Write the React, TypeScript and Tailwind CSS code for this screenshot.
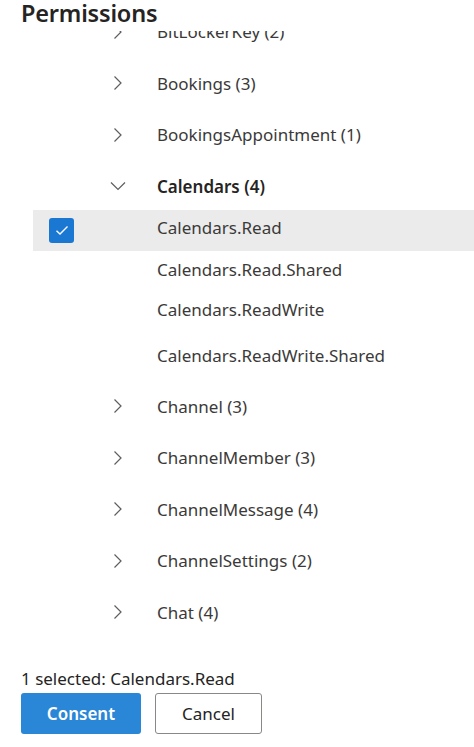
import React from 'react';

type Group = { name: string; count: number };

const before: Group[] = [
  { name: 'BitLockerKey', count: 2 },
  { name: 'Bookings', count: 3 },
  { name: 'BookingsAppointment', count: 1 },
];

const after: Group[] = [
  { name: 'Channel', count: 3 },
  { name: 'ChannelMember', count: 3 },
  { name: 'ChannelMessage', count: 4 },
  { name: 'ChannelSettings', count: 2 },
  { name: 'Chat', count: 4 },
];

const children = [
  { name: 'Calendars.Read', h: 'h-[41px]', checked: true },
  { name: 'Calendars.Read.Shared', h: 'h-[39px]', checked: false },
  { name: 'Calendars.ReadWrite', h: 'h-[41px]', checked: false },
  { name: 'Calendars.ReadWrite.Shared', h: 'h-[50px]', checked: false },
];

function ChevronRight() {
  return (
    <svg width="10" height="16" viewBox="0 0 10 16" fill="none">
      <path d="M1.5 1.5 L8 8 L1.5 14.5" stroke="#605e5c" strokeWidth="1.2" />
    </svg>
  );
}

function ChevronDown() {
  return (
    <svg width="16" height="10" viewBox="0 0 16 10" fill="none">
      <path d="M1 1.5 L8 8.5 L15 1.5" stroke="#605e5c" strokeWidth="1.2" />
    </svg>
  );
}

function GroupRow({ g }: { g: Group }) {
  return (
    <div className="h-[51.5px] flex items-center">
      <div className="w-[113px] shrink-0" />
      <div className="w-[44px] shrink-0 flex items-center">
        <ChevronRight />
      </div>
      <span>
        {g.name} ({g.count})
      </span>
    </div>
  );
}

export default function App() {
  return (
    <div
      className="w-[474px] h-[747px] bg-white flex flex-col text-[#3b3a39] overflow-hidden"
      style={{ fontFamily: '"Noto Sans", "Open Sans", sans-serif' }}
    >
      <h1 className="h-[31px] shrink-0 pl-[21px] text-[23.5px] leading-[27px] font-semibold text-[#252423] tracking-[-0.2px]">
        Permissions
      </h1>

      <div className="h-[609px] shrink-0 overflow-hidden text-[17px]">
        <div className="-mt-[25px]">
          {before.map((g) => (
            <GroupRow key={g.name} g={g} />
          ))}

          <div className="h-[49px] flex items-center">
            <div className="w-[110px] shrink-0" />
            <div className="w-[47px] shrink-0 flex items-center pt-[2px]">
              <ChevronDown />
            </div>
            <span className="font-semibold text-[#252423] mt-[3px]">Calendars (4)</span>
          </div>

          {children.map((c) => (
            <div
              key={c.name}
              className={`${c.h} flex items-center ml-[33px] ${c.checked ? 'bg-[#ebebeb]' : ''}`}
            >
              <div className="w-[124px] shrink-0 pl-[16px] flex items-center">
                {c.checked && (
                  <div className="w-[25px] h-[25px] rounded-[3px] bg-[#1a78d2] flex items-center justify-center">
                    <svg width="14" height="11" viewBox="0 0 14 11" fill="none">
                      <path d="M1.5 5.8 L5 9 L12.5 1.5" stroke="white" strokeWidth="1.4" />
                    </svg>
                  </div>
                )}
              </div>
              <span className={c.checked ? '-mt-[4px]' : ''}>{c.name}</span>
            </div>
          ))}

          {after.map((g) => (
            <GroupRow key={g.name} g={g} />
          ))}
        </div>
      </div>

      <div className="pl-[21px] pt-[28px]">
        <p className="text-[17px] leading-[22px] text-[#252423]">1 selected: Calendars.Read</p>
        <div className="flex gap-[14px] mt-[3px]">
          <button className="w-[120px] h-[41px] rounded-[3px] bg-[#2a86d6] text-white text-[17px] font-semibold">
            Consent
          </button>
          <button className="w-[107px] h-[41px] rounded-[3px] bg-white border border-[#8a8886] text-[#252423] text-[17px]">
            Cancel
          </button>
        </div>
      </div>
    </div>
  );
}
